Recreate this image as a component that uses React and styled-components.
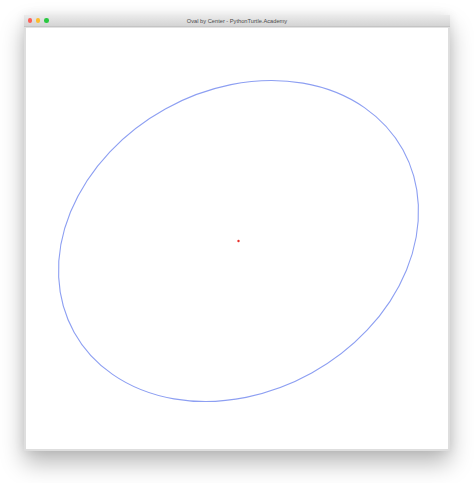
import React from 'react'
import styled, { createGlobalStyle } from 'styled-components'

const GlobalStyle = createGlobalStyle`
    html, body {
        margin: 0;
        padding: 0;
        background: #fff;
    }
    body {
        font-family: "Liberation Sans", Arial, sans-serif;
    }
`

const Page = styled.div`
    width: 474px;
    height: 483px;
    padding: 15px 0 0 24px;
    box-sizing: border-box;
    background: #fff;
`

const Window = styled.div`
    width: 426px;
    height: 436px;
    display: flex;
    flex-direction: column;
    background: #d9d9d9;
    box-shadow: 0 12px 22px rgba(0, 0, 0, 0.28), 0 0 10px rgba(0, 0, 0, 0.08);
`

const TitleBar = styled.div`
    height: 11px;
    flex: none;
    display: flex;
    align-items: center;
    position: relative;
    background: linear-gradient(#ebebeb, #d4d4d4);
    border-bottom: 1px solid #c4c4c4;
`

const Lights = styled.div`
    display: flex;
    gap: 3.6px;
    padding-left: 3.7px;
`

const Light = styled.span`
    width: 4.6px;
    height: 4.6px;
    border-radius: 50%;
    background: ${p => p.color};
`

const Title = styled.div`
    position: absolute;
    left: 0;
    right: 0;
    top: 0;
    bottom: 0;
    display: flex;
    align-items: center;
    justify-content: center;
    font-size: 5.7px;
    color: #4a4a4a;
    pointer-events: none;
`

const Canvas = styled.div`
    flex: 1;
    display: flex;
    background: #fff;
    border: 2px solid #dedede;
    border-top: 1px solid #e2e2e2;
`

const Drawing = styled.svg`
    display: block;
    width: 100%;
    height: 100%;
`

export default function App() {
    return (
        <Page>
            <GlobalStyle />
            <Window>
                <TitleBar>
                    <Lights>
                        <Light color="#fc5f57" />
                        <Light color="#fdbc2e" />
                        <Light color="#29c840" />
                    </Lights>
                    <Title>Oval by Center - PythonTurtle.Academy</Title>
                </TitleBar>
                <Canvas>
                    <Drawing viewBox="26 27 422 421" preserveAspectRatio="none">
                        <ellipse
                            cx="238.5"
                            cy="240"
                            rx="188"
                            ry="151"
                            transform="rotate(-29 238.5 240)"
                            fill="none"
                            stroke="#8d9ff2"
                            strokeWidth="1.1"
                        />
                        <circle cx="238.5" cy="240" r="1.2" fill="#e8302a" />
                    </Drawing>
                </Canvas>
            </Window>
        </Page>
    )
}
